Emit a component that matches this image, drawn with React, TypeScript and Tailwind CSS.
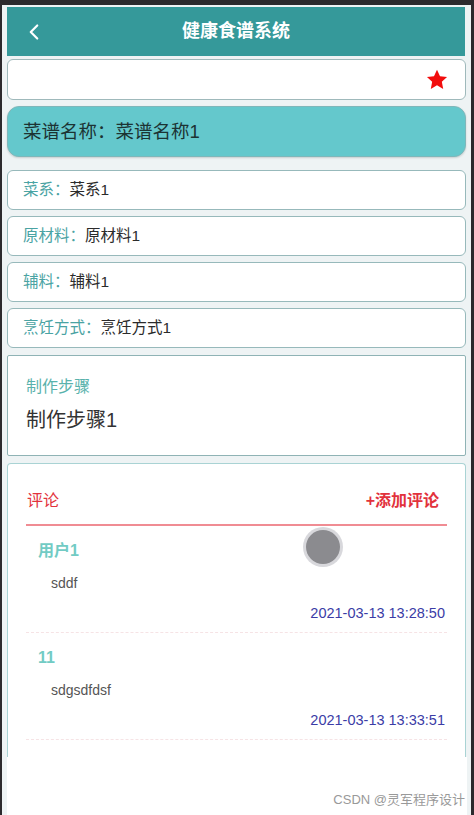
import { ChevronLeft } from "lucide-react";

const font = { fontFamily: '"Liberation Sans", "Noto Sans CJK SC", sans-serif' };

const fields = [
  { label: "菜系", value: "菜系1" },
  { label: "原材料", value: "原材料1" },
  { label: "辅料", value: "辅料1" },
  { label: "烹饪方式", value: "烹饪方式1" },
];

const comments = [
  { user: "用户1", text: "sddf", time: "2021-03-13 13:28:50" },
  { user: "11", text: "sdgsdfdsf", time: "2021-03-13 13:33:51" },
];

function Star() {
  return (
    <svg width="22" height="21" viewBox="0 0 24 23">
      <path
        d="M12 0.8l3.3 7.1 7.7 0.9-5.7 5.3 1.5 7.7L12 17.9l-6.8 3.9 1.5-7.7L1 8.8l7.7-0.9z"
        fill="#f20d0d"
      />
    </svg>
  );
}

export default function App() {
  return (
    <div className="w-[474px] h-[815px] bg-[#2c2a2d] pt-[5px] pl-[2px] pr-[3px] overflow-hidden" style={font}>
      <div className="relative h-full bg-[#eef3f4] pt-[2px] pl-[5px] pr-[5px] flex flex-col">
        <div className="h-[49px] bg-[#35999a] flex items-center relative mr-[1px]">
          <ChevronLeft className="absolute left-[14px] w-[26px] h-[26px] text-white" strokeWidth={2} />
          <div className="flex-1 text-center text-white font-bold text-[18px]">健康食谱系统</div>
        </div>

        <div className="mt-[3px] h-[41px] bg-white border border-[#9fb9bb] rounded-[6px] flex items-center justify-end pr-[17px]">
          <Star />
        </div>

        <div className="mt-[6px] h-[51px] bg-[#64c8cc] border border-[#7fb7ba] rounded-[12px] flex items-center pl-[15px] text-[18.5px] text-[#1c3333] shadow-[0_1px_2px_rgba(0,0,0,0.15)]">
          菜谱名称：菜谱名称1
        </div>

        <div className="mt-[13px] flex flex-col gap-[6px]">
          {fields.map((f) => (
            <div
              key={f.label}
              className="h-[40px] bg-white border border-[#97b9bb] rounded-[6px] flex items-center pl-[15px] text-[15.5px]"
            >
              <span className="text-[#4aa3a3]">{f.label}：</span>
              <span className="text-[#2b2b2b]">{f.value}</span>
            </div>
          ))}
        </div>

        <div className="mt-[7px] h-[101px] bg-white border border-[#8fb3b5] rounded-[2px] pl-[18px] pt-[19px]">
          <div className="text-[16px] text-[#59b2ac]">制作步骤</div>
          <div className="mt-[6px] text-[20px] text-[#333]">制作步骤1</div>
        </div>

        <div className="mt-[7px] flex-1 bg-white border-x border-t border-[#a9d3d4] rounded-t-[4px] px-[18px] pt-[24px]">
          <div className="flex items-center justify-between h-[26px] pl-[1px] pr-[8px]">
            <span className="text-[16px] text-[#e2323c]">评论</span>
            <span className="text-[16px] font-bold text-[#e2323c]">+添加评论</span>
          </div>
          <div className="mt-[10px] h-[2px] bg-[#f08c93]" />
          {comments.map((c) => (
            <div key={c.time} className="border-b border-dashed border-[#f6e3e5]">
              <div className="pl-[12px] pt-[13px] text-[16px] font-bold text-[#72cbc4] h-[36px]">{c.user}</div>
              <div className="pl-[25px] mt-[11px] text-[14px] text-[#555] h-[24px]">{c.text}</div>
              <div className="text-right pr-[2px] text-[14.5px] text-[#3b3ca6] mt-[6px] h-[29px]">{c.time}</div>
            </div>
          ))}
        </div>

        <div className="absolute left-[5px] right-[4px] bottom-0 h-[58px] bg-white">
          <div className="absolute right-[2px] bottom-[6px] text-[13px] text-[#999]">CSDN @灵军程序设计</div>
        </div>

        <div className="absolute left-[304px] top-[525px] w-[34px] h-[34px] rounded-full bg-[#8b8b8f] shadow-[0_0_0_3px_rgba(200,200,205,0.7)]" />
      </div>
    </div>
  );
}
